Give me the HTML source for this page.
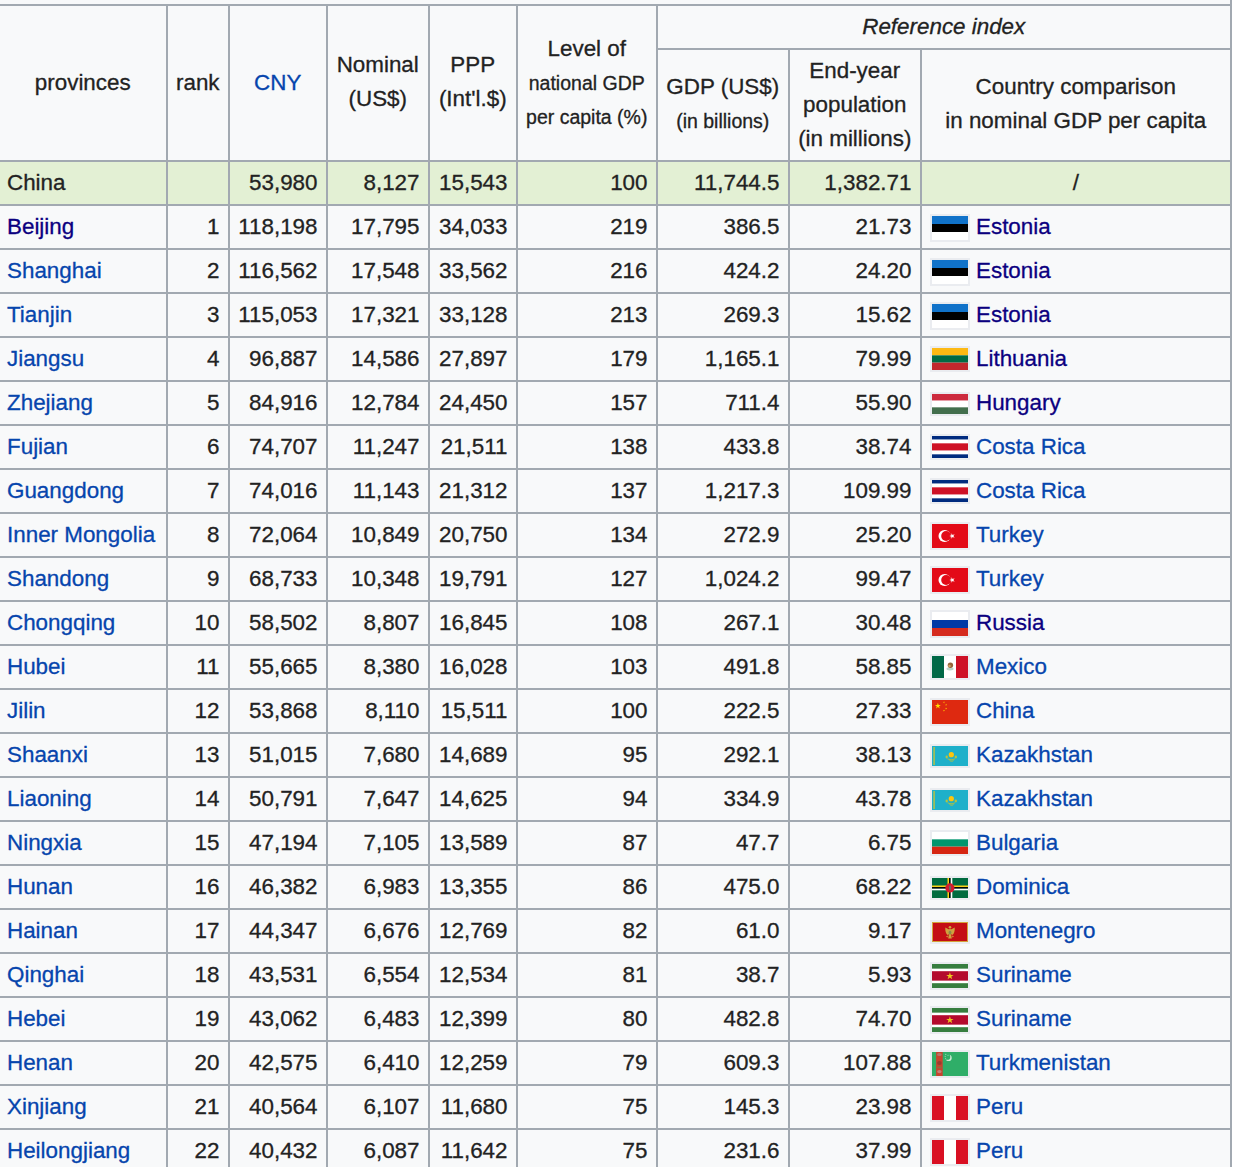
<!DOCTYPE html>
<html><head><meta charset="utf-8"><style>
html,body{margin:0;padding:0;background:#fff;width:1233px;height:1167px;overflow:hidden}
body{position:relative;font-family:"Liberation Sans",sans-serif;font-size:22.4px;color:#222}
div{position:absolute}
.t{white-space:nowrap;line-height:26px;-webkit-text-stroke:0.3px currentColor}
.f{width:36px;height:24px;border:2px solid #eaecf0;background:#fff}
.f svg{display:block}
</style></head><body>
<div style="left:0px;top:0px;width:1230px;height:1167px;background:#f8f9fa"></div>
<div style="left:0px;top:162px;width:1230px;height:42px;background:#e3f0d4"></div>
<div style="left:0px;top:4px;width:1232px;height:2px;background:#a2a9b1"></div>
<div style="left:656px;top:48px;width:576px;height:2px;background:#a2a9b1"></div>
<div style="left:0px;top:160px;width:1232px;height:2px;background:#a2a9b1"></div>
<div style="left:0px;top:204px;width:1232px;height:2px;background:#a2a9b1"></div>
<div style="left:0px;top:248px;width:1232px;height:2px;background:#a2a9b1"></div>
<div style="left:0px;top:292px;width:1232px;height:2px;background:#a2a9b1"></div>
<div style="left:0px;top:336px;width:1232px;height:2px;background:#a2a9b1"></div>
<div style="left:0px;top:380px;width:1232px;height:2px;background:#a2a9b1"></div>
<div style="left:0px;top:424px;width:1232px;height:2px;background:#a2a9b1"></div>
<div style="left:0px;top:468px;width:1232px;height:2px;background:#a2a9b1"></div>
<div style="left:0px;top:512px;width:1232px;height:2px;background:#a2a9b1"></div>
<div style="left:0px;top:556px;width:1232px;height:2px;background:#a2a9b1"></div>
<div style="left:0px;top:600px;width:1232px;height:2px;background:#a2a9b1"></div>
<div style="left:0px;top:644px;width:1232px;height:2px;background:#a2a9b1"></div>
<div style="left:0px;top:688px;width:1232px;height:2px;background:#a2a9b1"></div>
<div style="left:0px;top:732px;width:1232px;height:2px;background:#a2a9b1"></div>
<div style="left:0px;top:776px;width:1232px;height:2px;background:#a2a9b1"></div>
<div style="left:0px;top:820px;width:1232px;height:2px;background:#a2a9b1"></div>
<div style="left:0px;top:864px;width:1232px;height:2px;background:#a2a9b1"></div>
<div style="left:0px;top:908px;width:1232px;height:2px;background:#a2a9b1"></div>
<div style="left:0px;top:952px;width:1232px;height:2px;background:#a2a9b1"></div>
<div style="left:0px;top:996px;width:1232px;height:2px;background:#a2a9b1"></div>
<div style="left:0px;top:1040px;width:1232px;height:2px;background:#a2a9b1"></div>
<div style="left:0px;top:1084px;width:1232px;height:2px;background:#a2a9b1"></div>
<div style="left:0px;top:1128px;width:1232px;height:2px;background:#a2a9b1"></div>
<div style="left:166px;top:4px;width:2px;height:1163px;background:#a2a9b1"></div>
<div style="left:228px;top:4px;width:2px;height:1163px;background:#a2a9b1"></div>
<div style="left:326px;top:4px;width:2px;height:1163px;background:#a2a9b1"></div>
<div style="left:428px;top:4px;width:2px;height:1163px;background:#a2a9b1"></div>
<div style="left:516px;top:4px;width:2px;height:1163px;background:#a2a9b1"></div>
<div style="left:656px;top:4px;width:2px;height:1163px;background:#a2a9b1"></div>
<div style="left:788px;top:48px;width:2px;height:1119px;background:#a2a9b1"></div>
<div style="left:920px;top:48px;width:2px;height:1119px;background:#a2a9b1"></div>
<div style="left:1230px;top:0px;width:2px;height:1167px;background:#a2a9b1"></div>
<div class="t" style="top:70px;left:-192px;width:549.5px;text-align:center;">provinces</div>
<div class="t" style="top:70px;left:-24px;width:443.5px;text-align:center;">rank</div>
<div class="t" style="top:70px;left:38px;width:479.5px;text-align:center;color:#0645ad;">CNY</div>
<div class="t" style="top:52px;left:136px;width:483.5px;text-align:center;">Nominal</div>
<div class="t" style="top:86px;left:136px;width:483.5px;text-align:center;">(US$)</div>
<div class="t" style="top:52px;left:238px;width:469.5px;text-align:center;">PPP</div>
<div class="t" style="top:86px;left:238px;width:469.5px;text-align:center;">(Int'l.$)</div>
<div class="t" style="top:36px;left:326px;width:521.5px;text-align:center;">Level of</div>
<div class="t" style="top:70px;left:326px;width:521.5px;text-align:center;font-size:19.5px;">national GDP</div>
<div class="t" style="top:104px;left:326px;width:521.5px;text-align:center;font-size:19.5px;">per capita (%)</div>
<div class="t" style="top:14px;left:466px;width:955.5px;text-align:center;font-style:italic;">Reference index</div>
<div class="t" style="top:74px;left:466px;width:513.5px;text-align:center;">GDP (US$)</div>
<div class="t" style="top:108px;left:466px;width:513.5px;text-align:center;font-size:19.5px;">(in billions)</div>
<div class="t" style="top:58px;left:598px;width:513.5px;text-align:center;">End-year</div>
<div class="t" style="top:92px;left:598px;width:513.5px;text-align:center;">population</div>
<div class="t" style="top:126px;left:598px;width:513.5px;text-align:center;">(in millions)</div>
<div class="t" style="top:74px;left:730px;width:691.5px;text-align:center;">Country comparison</div>
<div class="t" style="top:108px;left:730px;width:691.5px;text-align:center;">in nominal GDP per capita</div>
<div class="t" style="top:170px;left:7px;">China</div>
<div class="t" style="top:170px;left:38px;width:279.5px;text-align:right;">53,980</div>
<div class="t" style="top:170px;left:136px;width:283.5px;text-align:right;">8,127</div>
<div class="t" style="top:170px;left:238px;width:269.5px;text-align:right;">15,543</div>
<div class="t" style="top:170px;left:326px;width:321.5px;text-align:right;">100</div>
<div class="t" style="top:170px;left:466px;width:313.5px;text-align:right;">11,744.5</div>
<div class="t" style="top:170px;left:598px;width:313.5px;text-align:right;">1,382.71</div>
<div class="t" style="top:170px;left:730px;width:691.5px;text-align:center;">/</div>
<div class="t" style="top:214px;left:7px;color:#0b0080;">Beijing</div>
<div class="t" style="top:214px;left:-24px;width:243.5px;text-align:right;">1</div>
<div class="t" style="top:214px;left:38px;width:279.5px;text-align:right;">118,198</div>
<div class="t" style="top:214px;left:136px;width:283.5px;text-align:right;">17,795</div>
<div class="t" style="top:214px;left:238px;width:269.5px;text-align:right;">34,033</div>
<div class="t" style="top:214px;left:326px;width:321.5px;text-align:right;">219</div>
<div class="t" style="top:214px;left:466px;width:313.5px;text-align:right;">386.5</div>
<div class="t" style="top:214px;left:598px;width:313.5px;text-align:right;">21.73</div>
<div class="f" style="left:930px;top:214px;height:24px"><svg width="36" height="24" viewBox="0 0 36 24"><rect x="0" y="0.00" width="36" height="8.00" fill="#1072c9"/><rect x="0" y="8.00" width="36" height="8.00" fill="#000"/><rect x="0" y="16.00" width="36" height="8.00" fill="#fff"/></svg></div>
<div class="t" style="top:214px;left:976px;color:#0b0080;">Estonia</div>
<div class="t" style="top:258px;left:7px;color:#0645ad;">Shanghai</div>
<div class="t" style="top:258px;left:-24px;width:243.5px;text-align:right;">2</div>
<div class="t" style="top:258px;left:38px;width:279.5px;text-align:right;">116,562</div>
<div class="t" style="top:258px;left:136px;width:283.5px;text-align:right;">17,548</div>
<div class="t" style="top:258px;left:238px;width:269.5px;text-align:right;">33,562</div>
<div class="t" style="top:258px;left:326px;width:321.5px;text-align:right;">216</div>
<div class="t" style="top:258px;left:466px;width:313.5px;text-align:right;">424.2</div>
<div class="t" style="top:258px;left:598px;width:313.5px;text-align:right;">24.20</div>
<div class="f" style="left:930px;top:258px;height:24px"><svg width="36" height="24" viewBox="0 0 36 24"><rect x="0" y="0.00" width="36" height="8.00" fill="#1072c9"/><rect x="0" y="8.00" width="36" height="8.00" fill="#000"/><rect x="0" y="16.00" width="36" height="8.00" fill="#fff"/></svg></div>
<div class="t" style="top:258px;left:976px;color:#0b0080;">Estonia</div>
<div class="t" style="top:302px;left:7px;color:#0645ad;">Tianjin</div>
<div class="t" style="top:302px;left:-24px;width:243.5px;text-align:right;">3</div>
<div class="t" style="top:302px;left:38px;width:279.5px;text-align:right;">115,053</div>
<div class="t" style="top:302px;left:136px;width:283.5px;text-align:right;">17,321</div>
<div class="t" style="top:302px;left:238px;width:269.5px;text-align:right;">33,128</div>
<div class="t" style="top:302px;left:326px;width:321.5px;text-align:right;">213</div>
<div class="t" style="top:302px;left:466px;width:313.5px;text-align:right;">269.3</div>
<div class="t" style="top:302px;left:598px;width:313.5px;text-align:right;">15.62</div>
<div class="f" style="left:930px;top:302px;height:24px"><svg width="36" height="24" viewBox="0 0 36 24"><rect x="0" y="0.00" width="36" height="8.00" fill="#1072c9"/><rect x="0" y="8.00" width="36" height="8.00" fill="#000"/><rect x="0" y="16.00" width="36" height="8.00" fill="#fff"/></svg></div>
<div class="t" style="top:302px;left:976px;color:#0b0080;">Estonia</div>
<div class="t" style="top:346px;left:7px;color:#0645ad;">Jiangsu</div>
<div class="t" style="top:346px;left:-24px;width:243.5px;text-align:right;">4</div>
<div class="t" style="top:346px;left:38px;width:279.5px;text-align:right;">96,887</div>
<div class="t" style="top:346px;left:136px;width:283.5px;text-align:right;">14,586</div>
<div class="t" style="top:346px;left:238px;width:269.5px;text-align:right;">27,897</div>
<div class="t" style="top:346px;left:326px;width:321.5px;text-align:right;">179</div>
<div class="t" style="top:346px;left:466px;width:313.5px;text-align:right;">1,165.1</div>
<div class="t" style="top:346px;left:598px;width:313.5px;text-align:right;">79.99</div>
<div class="f" style="left:930px;top:346px;height:22px"><svg width="36" height="22" viewBox="0 0 36 22"><rect x="0" y="0.00" width="36" height="7.33" fill="#fdb913"/><rect x="0" y="7.33" width="36" height="7.33" fill="#006a44"/><rect x="0" y="14.67" width="36" height="7.33" fill="#c1272d"/></svg></div>
<div class="t" style="top:346px;left:976px;color:#0b0080;">Lithuania</div>
<div class="t" style="top:390px;left:7px;color:#0645ad;">Zhejiang</div>
<div class="t" style="top:390px;left:-24px;width:243.5px;text-align:right;">5</div>
<div class="t" style="top:390px;left:38px;width:279.5px;text-align:right;">84,916</div>
<div class="t" style="top:390px;left:136px;width:283.5px;text-align:right;">12,784</div>
<div class="t" style="top:390px;left:238px;width:269.5px;text-align:right;">24,450</div>
<div class="t" style="top:390px;left:326px;width:321.5px;text-align:right;">157</div>
<div class="t" style="top:390px;left:466px;width:313.5px;text-align:right;">711.4</div>
<div class="t" style="top:390px;left:598px;width:313.5px;text-align:right;">55.90</div>
<div class="f" style="left:930px;top:392px;height:20px"><svg width="36" height="20" viewBox="0 0 36 20"><rect x="0" y="0.00" width="36" height="6.67" fill="#cd2a3e"/><rect x="0" y="6.67" width="36" height="6.67" fill="#fff"/><rect x="0" y="13.33" width="36" height="6.67" fill="#436f4d"/></svg></div>
<div class="t" style="top:390px;left:976px;color:#0b0080;">Hungary</div>
<div class="t" style="top:434px;left:7px;color:#0645ad;">Fujian</div>
<div class="t" style="top:434px;left:-24px;width:243.5px;text-align:right;">6</div>
<div class="t" style="top:434px;left:38px;width:279.5px;text-align:right;">74,707</div>
<div class="t" style="top:434px;left:136px;width:283.5px;text-align:right;">11,247</div>
<div class="t" style="top:434px;left:238px;width:269.5px;text-align:right;">21,511</div>
<div class="t" style="top:434px;left:326px;width:321.5px;text-align:right;">138</div>
<div class="t" style="top:434px;left:466px;width:313.5px;text-align:right;">433.8</div>
<div class="t" style="top:434px;left:598px;width:313.5px;text-align:right;">38.74</div>
<div class="f" style="left:930px;top:434px;height:22px"><svg width="36" height="22" viewBox="0 0 36 22"><rect x="0" y="0.00" width="36" height="3.67" fill="#002b7f"/><rect x="0" y="3.67" width="36" height="3.67" fill="#fff"/><rect x="0" y="7.33" width="36" height="7.33" fill="#ce1126"/><rect x="0" y="14.67" width="36" height="3.67" fill="#fff"/><rect x="0" y="18.33" width="36" height="3.67" fill="#002b7f"/></svg></div>
<div class="t" style="top:434px;left:976px;color:#0645ad;">Costa Rica</div>
<div class="t" style="top:478px;left:7px;color:#0645ad;">Guangdong</div>
<div class="t" style="top:478px;left:-24px;width:243.5px;text-align:right;">7</div>
<div class="t" style="top:478px;left:38px;width:279.5px;text-align:right;">74,016</div>
<div class="t" style="top:478px;left:136px;width:283.5px;text-align:right;">11,143</div>
<div class="t" style="top:478px;left:238px;width:269.5px;text-align:right;">21,312</div>
<div class="t" style="top:478px;left:326px;width:321.5px;text-align:right;">137</div>
<div class="t" style="top:478px;left:466px;width:313.5px;text-align:right;">1,217.3</div>
<div class="t" style="top:478px;left:598px;width:313.5px;text-align:right;">109.99</div>
<div class="f" style="left:930px;top:478px;height:22px"><svg width="36" height="22" viewBox="0 0 36 22"><rect x="0" y="0.00" width="36" height="3.67" fill="#002b7f"/><rect x="0" y="3.67" width="36" height="3.67" fill="#fff"/><rect x="0" y="7.33" width="36" height="7.33" fill="#ce1126"/><rect x="0" y="14.67" width="36" height="3.67" fill="#fff"/><rect x="0" y="18.33" width="36" height="3.67" fill="#002b7f"/></svg></div>
<div class="t" style="top:478px;left:976px;color:#0645ad;">Costa Rica</div>
<div class="t" style="top:522px;left:7px;color:#0645ad;">Inner Mongolia</div>
<div class="t" style="top:522px;left:-24px;width:243.5px;text-align:right;">8</div>
<div class="t" style="top:522px;left:38px;width:279.5px;text-align:right;">72,064</div>
<div class="t" style="top:522px;left:136px;width:283.5px;text-align:right;">10,849</div>
<div class="t" style="top:522px;left:238px;width:269.5px;text-align:right;">20,750</div>
<div class="t" style="top:522px;left:326px;width:321.5px;text-align:right;">134</div>
<div class="t" style="top:522px;left:466px;width:313.5px;text-align:right;">272.9</div>
<div class="t" style="top:522px;left:598px;width:313.5px;text-align:right;">25.20</div>
<div class="f" style="left:930px;top:522px;height:24px"><svg width="36" height="24" viewBox="0 0 36 24"><rect width="36" height="24" fill="#e30a17"/><circle cx="12.6" cy="12" r="6.1" fill="#fff"/><circle cx="14.1" cy="12" r="4.9" fill="#e30a17"/><polygon points="17.40,12.00 19.40,11.35 19.40,9.24 20.64,10.95 22.65,10.30 21.41,12.00 22.65,13.70 20.64,13.05 19.40,14.76 19.40,12.65" fill="#fff"/></svg></div>
<div class="t" style="top:522px;left:976px;color:#0645ad;">Turkey</div>
<div class="t" style="top:566px;left:7px;color:#0645ad;">Shandong</div>
<div class="t" style="top:566px;left:-24px;width:243.5px;text-align:right;">9</div>
<div class="t" style="top:566px;left:38px;width:279.5px;text-align:right;">68,733</div>
<div class="t" style="top:566px;left:136px;width:283.5px;text-align:right;">10,348</div>
<div class="t" style="top:566px;left:238px;width:269.5px;text-align:right;">19,791</div>
<div class="t" style="top:566px;left:326px;width:321.5px;text-align:right;">127</div>
<div class="t" style="top:566px;left:466px;width:313.5px;text-align:right;">1,024.2</div>
<div class="t" style="top:566px;left:598px;width:313.5px;text-align:right;">99.47</div>
<div class="f" style="left:930px;top:566px;height:24px"><svg width="36" height="24" viewBox="0 0 36 24"><rect width="36" height="24" fill="#e30a17"/><circle cx="12.6" cy="12" r="6.1" fill="#fff"/><circle cx="14.1" cy="12" r="4.9" fill="#e30a17"/><polygon points="17.40,12.00 19.40,11.35 19.40,9.24 20.64,10.95 22.65,10.30 21.41,12.00 22.65,13.70 20.64,13.05 19.40,14.76 19.40,12.65" fill="#fff"/></svg></div>
<div class="t" style="top:566px;left:976px;color:#0645ad;">Turkey</div>
<div class="t" style="top:610px;left:7px;color:#0645ad;">Chongqing</div>
<div class="t" style="top:610px;left:-24px;width:243.5px;text-align:right;">10</div>
<div class="t" style="top:610px;left:38px;width:279.5px;text-align:right;">58,502</div>
<div class="t" style="top:610px;left:136px;width:283.5px;text-align:right;">8,807</div>
<div class="t" style="top:610px;left:238px;width:269.5px;text-align:right;">16,845</div>
<div class="t" style="top:610px;left:326px;width:321.5px;text-align:right;">108</div>
<div class="t" style="top:610px;left:466px;width:313.5px;text-align:right;">267.1</div>
<div class="t" style="top:610px;left:598px;width:313.5px;text-align:right;">30.48</div>
<div class="f" style="left:930px;top:610px;height:24px"><svg width="36" height="24" viewBox="0 0 36 24"><rect x="0" y="0.00" width="36" height="8.00" fill="#fff"/><rect x="0" y="8.00" width="36" height="8.00" fill="#0039a6"/><rect x="0" y="16.00" width="36" height="8.00" fill="#d52b1e"/></svg></div>
<div class="t" style="top:610px;left:976px;color:#0b0080;">Russia</div>
<div class="t" style="top:654px;left:7px;color:#0645ad;">Hubei</div>
<div class="t" style="top:654px;left:-24px;width:243.5px;text-align:right;">11</div>
<div class="t" style="top:654px;left:38px;width:279.5px;text-align:right;">55,665</div>
<div class="t" style="top:654px;left:136px;width:283.5px;text-align:right;">8,380</div>
<div class="t" style="top:654px;left:238px;width:269.5px;text-align:right;">16,028</div>
<div class="t" style="top:654px;left:326px;width:321.5px;text-align:right;">103</div>
<div class="t" style="top:654px;left:466px;width:313.5px;text-align:right;">491.8</div>
<div class="t" style="top:654px;left:598px;width:313.5px;text-align:right;">58.85</div>
<div class="f" style="left:930px;top:654px;height:22px"><svg width="36" height="22" viewBox="0 0 36 22"><rect x="0.00" y="0" width="12.00" height="22" fill="#006847"/><rect x="12.00" y="0" width="12.00" height="22" fill="#fff"/><rect x="24.00" y="0" width="12.00" height="22" fill="#ce1126"/><ellipse cx="18" cy="12.8" rx="3.6" ry="1.6" fill="#9cc4b4" opacity="0.7"/><circle cx="18.4" cy="9.2" r="2.7" fill="#94653a"/><circle cx="17.5" cy="10" r="1.3" fill="#d9b36e" opacity="0.8"/></svg></div>
<div class="t" style="top:654px;left:976px;color:#0645ad;">Mexico</div>
<div class="t" style="top:698px;left:7px;color:#0645ad;">Jilin</div>
<div class="t" style="top:698px;left:-24px;width:243.5px;text-align:right;">12</div>
<div class="t" style="top:698px;left:38px;width:279.5px;text-align:right;">53,868</div>
<div class="t" style="top:698px;left:136px;width:283.5px;text-align:right;">8,110</div>
<div class="t" style="top:698px;left:238px;width:269.5px;text-align:right;">15,511</div>
<div class="t" style="top:698px;left:326px;width:321.5px;text-align:right;">100</div>
<div class="t" style="top:698px;left:466px;width:313.5px;text-align:right;">222.5</div>
<div class="t" style="top:698px;left:598px;width:313.5px;text-align:right;">27.33</div>
<div class="f" style="left:930px;top:698px;height:24px"><svg width="36" height="24" viewBox="0 0 36 24"><rect width="36" height="24" fill="#de2910"/><polygon points="5.90,2.80 6.60,4.94 8.85,4.94 7.03,6.27 7.72,8.41 5.90,7.08 4.08,8.41 4.77,6.27 2.95,4.94 5.20,4.94" fill="#ffde00"/><polygon points="12.55,1.35 12.38,2.13 13.08,2.53 12.28,2.61 12.11,3.39 11.79,2.66 11.00,2.75 11.59,2.21 11.26,1.48 11.96,1.88" fill="#ffc000"/><polygon points="14.29,3.72 14.40,4.51 15.19,4.65 14.47,5.00 14.58,5.79 14.03,5.21 13.31,5.56 13.68,4.86 13.13,4.28 13.92,4.42" fill="#ffc000"/><polygon points="13.91,7.42 14.28,8.12 15.07,7.98 14.52,8.56 14.89,9.26 14.17,8.91 13.62,9.49 13.73,8.70 13.01,8.35 13.80,8.21" fill="#ffc000"/><polygon points="11.45,9.65 12.04,10.18 12.74,9.78 12.41,10.51 13.00,11.05 12.21,10.96 11.89,11.69 11.72,10.91 10.92,10.83 11.62,10.43" fill="#ffc000"/></svg></div>
<div class="t" style="top:698px;left:976px;color:#0645ad;">China</div>
<div class="t" style="top:742px;left:7px;color:#0645ad;">Shaanxi</div>
<div class="t" style="top:742px;left:-24px;width:243.5px;text-align:right;">13</div>
<div class="t" style="top:742px;left:38px;width:279.5px;text-align:right;">51,015</div>
<div class="t" style="top:742px;left:136px;width:283.5px;text-align:right;">7,680</div>
<div class="t" style="top:742px;left:238px;width:269.5px;text-align:right;">14,689</div>
<div class="t" style="top:742px;left:326px;width:321.5px;text-align:right;">95</div>
<div class="t" style="top:742px;left:466px;width:313.5px;text-align:right;">292.1</div>
<div class="t" style="top:742px;left:598px;width:313.5px;text-align:right;">38.13</div>
<div class="f" style="left:930px;top:744px;height:20px"><svg width="36" height="20" viewBox="0 0 36 20"><rect width="36" height="20" fill="#1eb0ca"/><rect x="1.3" y="1" width="1.6" height="18" fill="#a8c050"/><circle cx="19.3" cy="8.7" r="2.6" fill="#fec50c"/><ellipse cx="14.7" cy="11" rx="1.2" ry="1.4" fill="#b6c23e"/><ellipse cx="23.8" cy="11" rx="1.2" ry="1.4" fill="#b6c23e"/><path d="M15.5 12.8 Q19.3 15.5 23 12.8" fill="none" stroke="#a9c048" stroke-width="0.9"/><ellipse cx="19.6" cy="14.4" rx="1.7" ry="1" fill="none" stroke="#a9c048" stroke-width="0.8"/></svg></div>
<div class="t" style="top:742px;left:976px;color:#0645ad;">Kazakhstan</div>
<div class="t" style="top:786px;left:7px;color:#0645ad;">Liaoning</div>
<div class="t" style="top:786px;left:-24px;width:243.5px;text-align:right;">14</div>
<div class="t" style="top:786px;left:38px;width:279.5px;text-align:right;">50,791</div>
<div class="t" style="top:786px;left:136px;width:283.5px;text-align:right;">7,647</div>
<div class="t" style="top:786px;left:238px;width:269.5px;text-align:right;">14,625</div>
<div class="t" style="top:786px;left:326px;width:321.5px;text-align:right;">94</div>
<div class="t" style="top:786px;left:466px;width:313.5px;text-align:right;">334.9</div>
<div class="t" style="top:786px;left:598px;width:313.5px;text-align:right;">43.78</div>
<div class="f" style="left:930px;top:788px;height:20px"><svg width="36" height="20" viewBox="0 0 36 20"><rect width="36" height="20" fill="#1eb0ca"/><rect x="1.3" y="1" width="1.6" height="18" fill="#a8c050"/><circle cx="19.3" cy="8.7" r="2.6" fill="#fec50c"/><ellipse cx="14.7" cy="11" rx="1.2" ry="1.4" fill="#b6c23e"/><ellipse cx="23.8" cy="11" rx="1.2" ry="1.4" fill="#b6c23e"/><path d="M15.5 12.8 Q19.3 15.5 23 12.8" fill="none" stroke="#a9c048" stroke-width="0.9"/><ellipse cx="19.6" cy="14.4" rx="1.7" ry="1" fill="none" stroke="#a9c048" stroke-width="0.8"/></svg></div>
<div class="t" style="top:786px;left:976px;color:#0645ad;">Kazakhstan</div>
<div class="t" style="top:830px;left:7px;color:#0645ad;">Ningxia</div>
<div class="t" style="top:830px;left:-24px;width:243.5px;text-align:right;">15</div>
<div class="t" style="top:830px;left:38px;width:279.5px;text-align:right;">47,194</div>
<div class="t" style="top:830px;left:136px;width:283.5px;text-align:right;">7,105</div>
<div class="t" style="top:830px;left:238px;width:269.5px;text-align:right;">13,589</div>
<div class="t" style="top:830px;left:326px;width:321.5px;text-align:right;">87</div>
<div class="t" style="top:830px;left:466px;width:313.5px;text-align:right;">47.7</div>
<div class="t" style="top:830px;left:598px;width:313.5px;text-align:right;">6.75</div>
<div class="f" style="left:930px;top:830px;height:22px"><svg width="36" height="22" viewBox="0 0 36 22"><rect x="0" y="0.00" width="36" height="7.33" fill="#fff"/><rect x="0" y="7.33" width="36" height="7.33" fill="#00966e"/><rect x="0" y="14.67" width="36" height="7.33" fill="#d62612"/></svg></div>
<div class="t" style="top:830px;left:976px;color:#0645ad;">Bulgaria</div>
<div class="t" style="top:874px;left:7px;color:#0645ad;">Hunan</div>
<div class="t" style="top:874px;left:-24px;width:243.5px;text-align:right;">16</div>
<div class="t" style="top:874px;left:38px;width:279.5px;text-align:right;">46,382</div>
<div class="t" style="top:874px;left:136px;width:283.5px;text-align:right;">6,983</div>
<div class="t" style="top:874px;left:238px;width:269.5px;text-align:right;">13,355</div>
<div class="t" style="top:874px;left:326px;width:321.5px;text-align:right;">86</div>
<div class="t" style="top:874px;left:466px;width:313.5px;text-align:right;">475.0</div>
<div class="t" style="top:874px;left:598px;width:313.5px;text-align:right;">68.22</div>
<div class="f" style="left:930px;top:876px;height:20px"><svg width="36" height="20" viewBox="0 0 36 20"><rect width="36" height="20" fill="#006b3f"/><rect x="0" y="7.5" width="36" height="1.6" fill="#fcd116"/><rect x="0" y="9.1" width="36" height="1.6" fill="#000"/><rect x="0" y="10.7" width="36" height="1.6" fill="#fff"/><rect x="15.5" y="0" width="1.6" height="20" fill="#fcd116"/><rect x="17.1" y="0" width="1.6" height="20" fill="#000"/><rect x="18.7" y="0" width="1.6" height="20" fill="#fff"/><circle cx="17.9" cy="9.9" r="4.6" fill="#d41c30"/><ellipse cx="18" cy="10" rx="0.9" ry="2.4" fill="#5b7a6a"/></svg></div>
<div class="t" style="top:874px;left:976px;color:#0645ad;">Dominica</div>
<div class="t" style="top:918px;left:7px;color:#0645ad;">Hainan</div>
<div class="t" style="top:918px;left:-24px;width:243.5px;text-align:right;">17</div>
<div class="t" style="top:918px;left:38px;width:279.5px;text-align:right;">44,347</div>
<div class="t" style="top:918px;left:136px;width:283.5px;text-align:right;">6,676</div>
<div class="t" style="top:918px;left:238px;width:269.5px;text-align:right;">12,769</div>
<div class="t" style="top:918px;left:326px;width:321.5px;text-align:right;">82</div>
<div class="t" style="top:918px;left:466px;width:313.5px;text-align:right;">61.0</div>
<div class="t" style="top:918px;left:598px;width:313.5px;text-align:right;">9.17</div>
<div class="f" style="left:930px;top:920px;height:20px"><svg width="36" height="20" viewBox="0 0 36 20"><rect width="36" height="20" fill="#d4a13a"/><rect x="1" y="1" width="34" height="18" fill="#c40d14"/><path d="M13.3 5.5 Q13 11 15.5 13 L17 12 L17 7.5 Z" fill="#d1a23d"/><path d="M22.7 5.5 Q23 11 20.5 13 L19 12 L19 7.5 Z" fill="#d1a23d"/><circle cx="18" cy="5.2" r="1.3" fill="#d1a23d"/><ellipse cx="18" cy="10" rx="2.2" ry="3" fill="#c9a044"/><ellipse cx="18" cy="10.6" rx="1.4" ry="1.8" fill="#8a8a4a"/><path d="M16.8 13 L19.2 13 L19.8 16.5 L16.2 16.5 Z" fill="#d1a23d"/><path d="M14 14.5 L16 13.5 L15.5 15.5 Z" fill="#d1a23d"/><path d="M22 14.5 L20 13.5 L20.5 15.5 Z" fill="#d1a23d"/></svg></div>
<div class="t" style="top:918px;left:976px;color:#0645ad;">Montenegro</div>
<div class="t" style="top:962px;left:7px;color:#0645ad;">Qinghai</div>
<div class="t" style="top:962px;left:-24px;width:243.5px;text-align:right;">18</div>
<div class="t" style="top:962px;left:38px;width:279.5px;text-align:right;">43,531</div>
<div class="t" style="top:962px;left:136px;width:283.5px;text-align:right;">6,554</div>
<div class="t" style="top:962px;left:238px;width:269.5px;text-align:right;">12,534</div>
<div class="t" style="top:962px;left:326px;width:321.5px;text-align:right;">81</div>
<div class="t" style="top:962px;left:466px;width:313.5px;text-align:right;">38.7</div>
<div class="t" style="top:962px;left:598px;width:313.5px;text-align:right;">5.93</div>
<div class="f" style="left:930px;top:962px;height:24px"><svg width="36" height="24" viewBox="0 0 36 24"><rect x="0" y="0.00" width="36" height="4.80" fill="#377e3f"/><rect x="0" y="4.80" width="36" height="2.40" fill="#fff"/><rect x="0" y="7.20" width="36" height="9.60" fill="#b40a2d"/><rect x="0" y="16.80" width="36" height="2.40" fill="#fff"/><rect x="0" y="19.20" width="36" height="4.80" fill="#377e3f"/><polygon points="17.90,8.20 18.78,10.89 21.61,10.89 19.32,12.56 20.19,15.26 17.90,13.59 15.61,15.26 16.48,12.56 14.19,10.89 17.02,10.89" fill="#ecc81d"/></svg></div>
<div class="t" style="top:962px;left:976px;color:#0645ad;">Suriname</div>
<div class="t" style="top:1006px;left:7px;color:#0645ad;">Hebei</div>
<div class="t" style="top:1006px;left:-24px;width:243.5px;text-align:right;">19</div>
<div class="t" style="top:1006px;left:38px;width:279.5px;text-align:right;">43,062</div>
<div class="t" style="top:1006px;left:136px;width:283.5px;text-align:right;">6,483</div>
<div class="t" style="top:1006px;left:238px;width:269.5px;text-align:right;">12,399</div>
<div class="t" style="top:1006px;left:326px;width:321.5px;text-align:right;">80</div>
<div class="t" style="top:1006px;left:466px;width:313.5px;text-align:right;">482.8</div>
<div class="t" style="top:1006px;left:598px;width:313.5px;text-align:right;">74.70</div>
<div class="f" style="left:930px;top:1006px;height:24px"><svg width="36" height="24" viewBox="0 0 36 24"><rect x="0" y="0.00" width="36" height="4.80" fill="#377e3f"/><rect x="0" y="4.80" width="36" height="2.40" fill="#fff"/><rect x="0" y="7.20" width="36" height="9.60" fill="#b40a2d"/><rect x="0" y="16.80" width="36" height="2.40" fill="#fff"/><rect x="0" y="19.20" width="36" height="4.80" fill="#377e3f"/><polygon points="17.90,8.20 18.78,10.89 21.61,10.89 19.32,12.56 20.19,15.26 17.90,13.59 15.61,15.26 16.48,12.56 14.19,10.89 17.02,10.89" fill="#ecc81d"/></svg></div>
<div class="t" style="top:1006px;left:976px;color:#0645ad;">Suriname</div>
<div class="t" style="top:1050px;left:7px;color:#0645ad;">Henan</div>
<div class="t" style="top:1050px;left:-24px;width:243.5px;text-align:right;">20</div>
<div class="t" style="top:1050px;left:38px;width:279.5px;text-align:right;">42,575</div>
<div class="t" style="top:1050px;left:136px;width:283.5px;text-align:right;">6,410</div>
<div class="t" style="top:1050px;left:238px;width:269.5px;text-align:right;">12,259</div>
<div class="t" style="top:1050px;left:326px;width:321.5px;text-align:right;">79</div>
<div class="t" style="top:1050px;left:466px;width:313.5px;text-align:right;">609.3</div>
<div class="t" style="top:1050px;left:598px;width:313.5px;text-align:right;">107.88</div>
<div class="f" style="left:930px;top:1050px;height:24px"><svg width="36" height="24" viewBox="0 0 36 24"><rect width="36" height="24" fill="#2fae68"/><rect x="4.1" y="0" width="6.6" height="24" fill="#c8432e"/><ellipse cx="7.4" cy="2.6" rx="2.4" ry="1.5" fill="#b0807a" opacity="0.8"/><ellipse cx="7.4" cy="11" rx="2.4" ry="2" fill="#8f3a2e" opacity="0.8"/><ellipse cx="7.4" cy="15.4" rx="2.4" ry="0.9" fill="#7a7a44" opacity="0.8"/><ellipse cx="7.4" cy="19.6" rx="2.3" ry="1.6" fill="#c0908a" opacity="0.8"/><circle cx="16.6" cy="5.9" r="3.1" fill="#cdebd6"/><circle cx="15.4" cy="4.9" r="2.9" fill="#2fae68"/><circle cx="13.8" cy="2.4" r="0.55" fill="#a8dcb8"/><circle cx="16" cy="3.2" r="0.55" fill="#a8dcb8"/><circle cx="13.2" cy="4.6" r="0.55" fill="#a8dcb8"/><circle cx="13.6" cy="6.4" r="0.5" fill="#a8dcb8"/></svg></div>
<div class="t" style="top:1050px;left:976px;color:#0645ad;">Turkmenistan</div>
<div class="t" style="top:1094px;left:7px;color:#0645ad;">Xinjiang</div>
<div class="t" style="top:1094px;left:-24px;width:243.5px;text-align:right;">21</div>
<div class="t" style="top:1094px;left:38px;width:279.5px;text-align:right;">40,564</div>
<div class="t" style="top:1094px;left:136px;width:283.5px;text-align:right;">6,107</div>
<div class="t" style="top:1094px;left:238px;width:269.5px;text-align:right;">11,680</div>
<div class="t" style="top:1094px;left:326px;width:321.5px;text-align:right;">75</div>
<div class="t" style="top:1094px;left:466px;width:313.5px;text-align:right;">145.3</div>
<div class="t" style="top:1094px;left:598px;width:313.5px;text-align:right;">23.98</div>
<div class="f" style="left:930px;top:1094px;height:24px"><svg width="36" height="24" viewBox="0 0 36 24"><rect x="0.00" y="0" width="12.00" height="24" fill="#d91023"/><rect x="12.00" y="0" width="12.00" height="24" fill="#fff"/><rect x="24.00" y="0" width="12.00" height="24" fill="#d91023"/></svg></div>
<div class="t" style="top:1094px;left:976px;color:#0645ad;">Peru</div>
<div class="t" style="top:1138px;left:7px;color:#0645ad;">Heilongjiang</div>
<div class="t" style="top:1138px;left:-24px;width:243.5px;text-align:right;">22</div>
<div class="t" style="top:1138px;left:38px;width:279.5px;text-align:right;">40,432</div>
<div class="t" style="top:1138px;left:136px;width:283.5px;text-align:right;">6,087</div>
<div class="t" style="top:1138px;left:238px;width:269.5px;text-align:right;">11,642</div>
<div class="t" style="top:1138px;left:326px;width:321.5px;text-align:right;">75</div>
<div class="t" style="top:1138px;left:466px;width:313.5px;text-align:right;">231.6</div>
<div class="t" style="top:1138px;left:598px;width:313.5px;text-align:right;">37.99</div>
<div class="f" style="left:930px;top:1138px;height:24px"><svg width="36" height="24" viewBox="0 0 36 24"><rect x="0.00" y="0" width="12.00" height="24" fill="#d91023"/><rect x="12.00" y="0" width="12.00" height="24" fill="#fff"/><rect x="24.00" y="0" width="12.00" height="24" fill="#d91023"/></svg></div>
<div class="t" style="top:1138px;left:976px;color:#0645ad;">Peru</div>
</body></html>
